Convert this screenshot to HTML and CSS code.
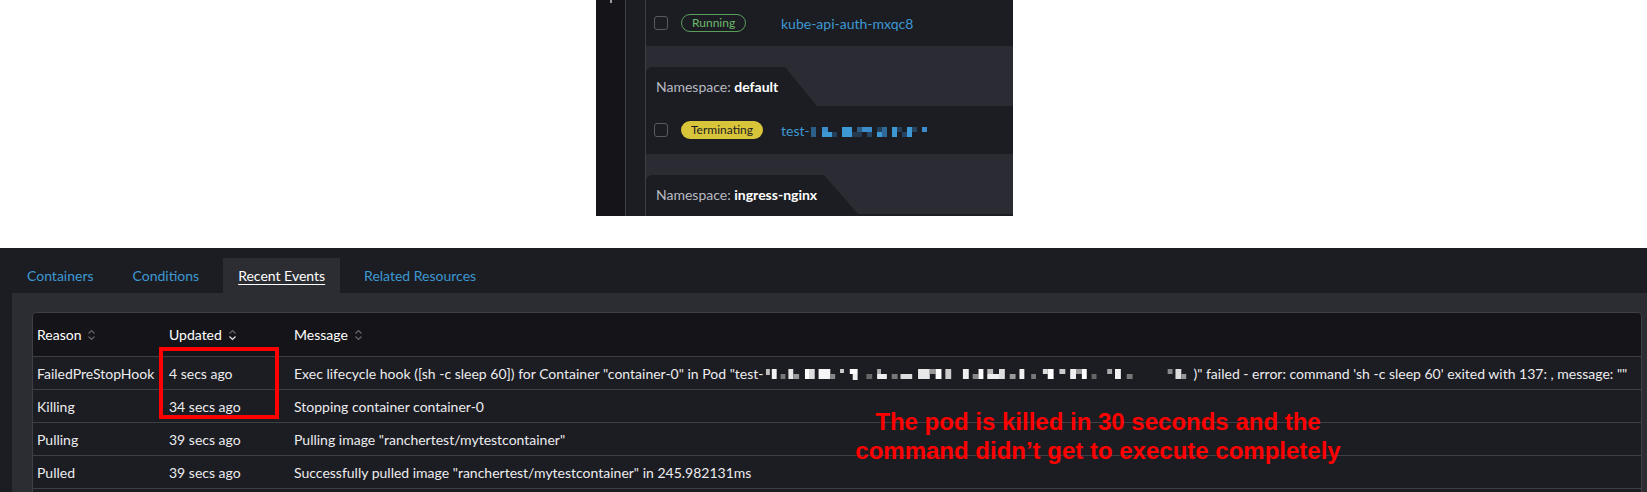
FILE: index.html
```html
<!DOCTYPE html>
<html>
<head>
<meta charset="utf-8">
<link rel="stylesheet" href="styles.css">
</head>
<body>
<div class="page">
  <div class="shot">
    <div class="side"><span class="side-mark"></span></div>
    <div class="rail"></div>
    <div class="list">
      <div class="row row-a">
        <span class="check"></span>
        <span class="status"><span class="badge badge-run">Running</span></span>
        <span class="link">kube-api-auth-mxqc8</span>
      </div>
      <div class="gap"></div>
      <div class="group"><div class="group-tab g1"><span class="ns-label">Namespace:</span>&nbsp;<span class="ns-name">default</span></div></div>
      <div class="row row-b">
        <span class="check"></span>
        <span class="status"><span class="badge badge-term">Terminating</span></span>
        <span class="link">test-</span>
        <svg class="blur-blue" width="124" height="12" viewBox="0 0 124 12">
          <rect x="0" y="2" width="5" height="10" fill="#2b5f88"/>
          <rect x="11" y="2" width="6" height="5" fill="#3a8ccb"/>
          <rect x="11" y="7" width="10" height="5" fill="#3d98d3"/>
          <rect x="21" y="7" width="5" height="5" fill="#24405a"/>
          <rect x="31" y="2" width="10" height="10" fill="#3d98d3"/>
          <rect x="41" y="7" width="10" height="5" fill="#263a4f"/>
          <rect x="46" y="2" width="5" height="5" fill="#2d5d85"/>
          <rect x="51" y="2" width="10" height="5" fill="#3a8ccb"/>
          <rect x="56" y="7" width="5" height="5" fill="#28455f"/>
          <rect x="66" y="2" width="5" height="5" fill="#24405a"/>
          <rect x="66" y="7" width="5" height="5" fill="#3d98d3"/>
          <rect x="71" y="2" width="5" height="10" fill="#2f6a99"/>
          <rect x="81" y="2" width="5" height="10" fill="#3d98d3"/>
          <rect x="86" y="2" width="5" height="5" fill="#24405a"/>
          <rect x="91" y="7" width="5" height="5" fill="#264461"/>
          <rect x="96" y="2" width="5" height="10" fill="#3d98d3"/>
          <rect x="101" y="2" width="5" height="5" fill="#28455f"/>
          <rect x="111" y="2" width="5" height="5" fill="#3a8ccb"/>
        </svg>
      </div>
      <div class="gap"></div>
      <div class="group"><div class="group-tab g2"><span class="ns-label">Namespace:</span>&nbsp;<span class="ns-name">ingress-nginx</span></div></div>
      <div class="row row-c"></div>
    </div>
  </div>

  <div class="detail">
    <div class="tabs">
      <span class="tab">Containers</span>
      <span class="tab">Conditions</span>
      <span class="tab active">Recent Events</span>
      <span class="tab">Related Resources</span>
    </div>
    <div class="tab-body">
      <div class="card">
        <div class="grid-row head">
          <div class="cell">Reason<svg class="sort" width="9" height="12" viewBox="0 0 9 12"><path d="M1.5 4.5 L4.5 1.5 L7.5 4.5" fill="none" stroke="#64656c" stroke-width="1.2"/><path d="M1.5 7.5 L4.5 10.5 L7.5 7.5" fill="none" stroke="#64656c" stroke-width="1.2"/></svg></div>
          <div class="cell">Updated<svg class="sort" width="9" height="12" viewBox="0 0 9 12"><path d="M1.5 4.5 L4.5 1.5 L7.5 4.5" fill="none" stroke="#64656c" stroke-width="1.2"/><path d="M1.5 7.5 L4.5 10.5 L7.5 7.5" fill="none" stroke="#e4e4e8" stroke-width="1.2"/></svg></div>
          <div class="cell">Message<svg class="sort" width="9" height="12" viewBox="0 0 9 12"><path d="M1.5 4.5 L4.5 1.5 L7.5 4.5" fill="none" stroke="#64656c" stroke-width="1.2"/><path d="M1.5 7.5 L4.5 10.5 L7.5 7.5" fill="none" stroke="#64656c" stroke-width="1.2"/></svg></div>
        </div>
        <div class="grid-row">
          <div class="cell">FailedPreStopHook</div>
          <div class="cell">4 secs ago</div>
          <div class="cell msg">Exec lifecycle hook ([sh -c sleep 60]) for Container "container-0" in Pod "test-<svg class="blur-white" width="430" height="14" viewBox="0 0 441 14" preserveAspectRatio="none">
              <rect x="2" y="3" width="4" height="6" fill="#bdbdbd"/>
              <rect x="8" y="3" width="5" height="10" fill="#f2f2f2"/>
              <rect x="17" y="8" width="5" height="5" fill="#777"/>
              <rect x="25" y="3" width="5" height="10" fill="#e6e6e6"/>
              <rect x="30" y="8" width="6" height="5" fill="#999"/>
              <rect x="42" y="3" width="5" height="10" fill="#fff"/>
              <rect x="47" y="3" width="5" height="10" fill="#ddd"/>
              <rect x="56" y="3" width="12" height="10" fill="#f5f5f5"/>
              <rect x="68" y="8" width="5" height="5" fill="#888"/>
              <rect x="78" y="3" width="4" height="4" fill="#ccc"/>
              <rect x="88" y="3" width="8" height="5" fill="#fff"/>
              <rect x="91" y="8" width="5" height="6" fill="#eee"/>
              <rect x="105" y="8" width="6" height="5" fill="#666"/>
              <rect x="116" y="3" width="4" height="5" fill="#aaa"/>
              <rect x="116" y="8" width="10" height="5" fill="#eee"/>
              <rect x="131" y="8" width="6" height="5" fill="#777"/>
              <rect x="140" y="8" width="12" height="5" fill="#ddd"/>
              <rect x="158" y="3" width="12" height="10" fill="#e8e8e8"/>
              <rect x="170" y="3" width="6" height="5" fill="#999"/>
              <rect x="176" y="3" width="6" height="10" fill="#fff"/>
              <rect x="186" y="3" width="6" height="10" fill="#ccc"/>
              <rect x="204" y="3" width="6" height="10" fill="#eee"/>
              <rect x="214" y="8" width="6" height="5" fill="#888"/>
              <rect x="220" y="3" width="5" height="10" fill="#fff"/>
              <rect x="229" y="3" width="6" height="5" fill="#bbb"/>
              <rect x="229" y="8" width="12" height="5" fill="#eee"/>
              <rect x="241" y="3" width="6" height="10" fill="#ddd"/>
              <rect x="252" y="8" width="6" height="5" fill="#999"/>
              <rect x="262" y="3" width="5" height="10" fill="#f0f0f0"/>
              <rect x="274" y="8" width="5" height="5" fill="#777"/>
              <rect x="286" y="3" width="5" height="5" fill="#ddd"/>
              <rect x="291" y="3" width="6" height="10" fill="#fff"/>
              <rect x="303" y="3" width="6" height="5" fill="#ccc"/>
              <rect x="314" y="3" width="6" height="10" fill="#eee"/>
              <rect x="320" y="3" width="6" height="5" fill="#999"/>
              <rect x="326" y="3" width="5" height="10" fill="#fff"/>
              <rect x="336" y="8" width="5" height="5" fill="#666"/>
              <rect x="352" y="3" width="5" height="5" fill="#aaa"/>
              <rect x="360" y="3" width="6" height="10" fill="#f2f2f2"/>
              <rect x="372" y="8" width="6" height="5" fill="#777"/>
              <rect x="414" y="3" width="5" height="5" fill="#888"/>
              <rect x="422" y="3" width="6" height="10" fill="#ddd"/>
              <rect x="428" y="8" width="5" height="5" fill="#999"/>
            </svg>)" failed - error: command 'sh -c sleep 60' exited with 137: , message: ""</div>
        </div>
        <div class="grid-row">
          <div class="cell">Killing</div>
          <div class="cell">34 secs ago</div>
          <div class="cell msg">Stopping container container-0</div>
        </div>
        <div class="grid-row">
          <div class="cell">Pulling</div>
          <div class="cell">39 secs ago</div>
          <div class="cell msg">Pulling image "ranchertest/mytestcontainer"</div>
        </div>
        <div class="grid-row">
          <div class="cell">Pulled</div>
          <div class="cell">39 secs ago</div>
          <div class="cell msg">Successfully pulled image "ranchertest/mytestcontainer" in 245.982131ms</div>
        </div>
      </div>
    </div>
    <div class="highlight"></div>
    <div class="note">The pod is killed in 30 seconds and the<br>command didn’t get to execute completely</div>
  </div>
</div>
</body>
</html>
```

FILE: styles.css
```css
html, body {
  margin: 0;
  padding: 0;
  background: #ffffff;
}

.page {
  width: 1647px;
  height: 492px;
  overflow: hidden;
  font-family: Lato, "Liberation Sans", sans-serif;
  font-size: 14px;
}

/* ---------- top pasted screenshot ---------- */
.shot {
  display: flex;
  margin-left: 596px;
  width: 417px;
  height: 216px;
}

.side {
  width: 29px;
  background: #151519;
  position: relative;
}

.side-mark {
  position: absolute;
  left: 14px;
  top: 0;
  width: 2px;
  height: 3px;
  background: #9a9aa0;
}

.rail {
  width: 19px;
  background: #1c1d22;
  border-left: 1px solid #3e3f45;
  border-right: 1px solid #3e3f45;
}

.list {
  flex: 1;
  display: flex;
  flex-direction: column;
  background: #2b2b33;
}

.row {
  display: flex;
  align-items: center;
  background: #1c1d22;
  padding-left: 8px;
}

.row-a { height: 46px; }
.row-b { height: 48px; }
.row-c { flex: 1; }

.gap { height: 21px; }

.check {
  width: 12px;
  height: 12px;
  border: 1px solid #575a62;
  border-radius: 3px;
  margin-right: 13px;
}

.status {
  width: 100px;
  display: flex;
}

.badge {
  height: 18px;
  line-height: 18px;
  border-radius: 9px;
  font-size: 12px;
  padding: 0 10px;
  box-sizing: border-box;
}

.badge-run {
  border: 1px solid #5a9e5a;
  color: #6cb86c;
  line-height: 16px;
}

.badge-term {
  background: #d9c53a;
  color: #1c1d22;
}

.link {
  color: #3d98d3;
  font-size: 14px;
}

.blur-blue {
  margin-left: 1px;
  margin-top: 1px;
}

.group {
  height: 39px;
  display: flex;
}

.group-tab {
  height: 39px;
  background: #1c1d22;
  border-top-left-radius: 6px;
  display: flex;
  align-items: center;
  padding-left: 10px;
  box-sizing: border-box;
  font-size: 14px;
}

.g1 {
  width: 171px;
  clip-path: polygon(0 0, 139px 0, 171px 100%, 0 100%);
}

.g2 {
  width: 212px;
  clip-path: polygon(0 0, 178px 0, 212px 100%, 0 100%);
}

.ns-label { color: #b9bac2; }
.ns-name { color: #ffffff; font-weight: 700; }

/* ---------- detail panel ---------- */
.detail {
  position: relative;
  margin-top: 32px;
  height: 244px;
  background: #1c1d22;
  display: flex;
  flex-direction: column;
}

.tabs {
  display: flex;
  gap: 9px;
  padding: 10px 0 0 12px;
}

.tab {
  height: 35px;
  line-height: 35px;
  padding: 0 15px;
  color: #3d98d3;
}

.tab.active {
  background: #2c2d32;
  color: #ffffff;
  text-decoration: underline;
  text-underline-offset: 3px;
}

.tab-body {
  flex: 1;
  margin-left: 12px;
  background: #2c2d32;
  padding: 19px 5px 0 20px;
}

.card {
  border: 1px solid #3e3f45;
  border-bottom: none;
  border-radius: 5px 5px 0 0;
  overflow: hidden;
  background: #1c1d22;
  height: 100%;
  box-sizing: border-box;
}

.grid-row {
  display: grid;
  grid-template-columns: 132px 125px 1fr;
  height: 33px;
  box-sizing: border-box;
  border-bottom: 1px solid #3e3f45;
  align-items: center;
  color: #ececef;
}

.grid-row.head {
  height: 44px;
  background: #151519;
  color: #ffffff;
}

.cell {
  padding-left: 4px;
  white-space: nowrap;
  overflow: hidden;
  display: flex;
  align-items: center;
}

.sort {
  margin-left: 6px;
  flex: none;
}

.blur-white {
  flex: none;
  margin-top: -1px;
}

.highlight {
  position: absolute;
  left: 159px;
  top: 99px;
  width: 120px;
  height: 72px;
  border: 4px solid #ff0000;
  box-sizing: border-box;
}

.note {
  position: absolute;
  left: 848px;
  top: 159px;
  width: 500px;
  text-align: center;
  font-family: "Liberation Sans", Arial, sans-serif;
  font-weight: 700;
  font-size: 24px;
  line-height: 29px;
  color: #ff0000;
}
```
